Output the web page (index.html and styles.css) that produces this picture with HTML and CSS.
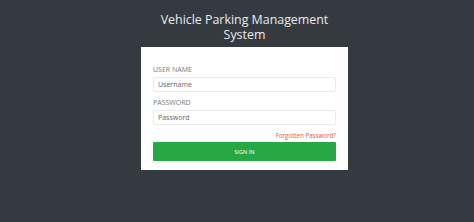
FILE: index.html
```html
<!DOCTYPE html>
<html>
<head>
  <meta charset="UTF-8"/>
  <title>Vehicle Parking Management System</title>
  <link rel="stylesheet" href="styles.css">
</head>
<body>
  <div class="wrapper">
    <h2 class="title"><span>Vehicle Parking Management</span><span>System</span></h2>
    <div class="card">
      <form>
        <label>USER NAME</label>
        <input type="text" placeholder="Username">
        <label>PASSWORD</label>
        <input type="password" placeholder="Password">
        <div class="forgot"><a href="#">Forgotten Password?</a></div>
        <button type="submit">SIGN IN</button>
      </form>
    </div>
  </div>
</body>
</html>
```
FILE: styles.css
```css
body {
  font-family: "Open Sans", sans-serif;
  background: #343a40;
  margin: 0;
  height: 222px;
  overflow: hidden;
}
.wrapper {
  width: 207px;
  margin: 0 auto;
  padding-left: 15px;
  padding-top: 12px;
}
.title {
  color: #e9ecef;
  font-weight: normal;
  font-size: 12.4px;
  line-height: 15px;
  text-align: center;
  margin: 0 -40px 5px;
}
.title span {
  display: block;
  height: 15px;
}
.card {
  background: #fff;
  padding: 18px 12px 9px;
}
label {
  display: block;
  font-size: 7px;
  line-height: 9px;
  color: #777;
  margin-bottom: 3px;
}
input {
  display: block;
  width: 100%;
  box-sizing: border-box;
  height: 15px;
  padding: 0 4px;
  border: 1px solid #e8eaed;
  border-radius: 2px;
  font-family: inherit;
  font-size: 7px;
  margin-bottom: 6px;
}
input::placeholder {
  color: #666;
}
.forgot {
  text-align: right;
  font-size: 6.2px;
  margin-top: 6px;
  margin-bottom: 2px;
}
.forgot a {
  color: #e9573f;
  text-decoration: none;
}
button {
  display: block;
  width: 100%;
  height: 19px;
  background: #28a745;
  color: #fff;
  border: none;
  border-radius: 1px;
  font-family: inherit;
  font-size: 5.6px;
}
```
